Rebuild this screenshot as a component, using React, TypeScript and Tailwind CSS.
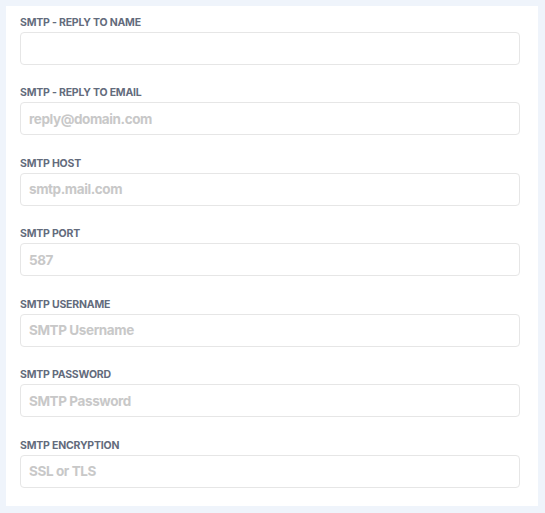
import React from 'react';

const fields = [
  { label: 'SMTP - REPLY TO NAME', placeholder: '' },
  { label: 'SMTP - REPLY TO EMAIL', placeholder: 'reply@domain.com' },
  { label: 'SMTP HOST', placeholder: 'smtp.mail.com' },
  { label: 'SMTP PORT', placeholder: '587' },
  { label: 'SMTP USERNAME', placeholder: 'SMTP Username' },
  { label: 'SMTP PASSWORD', placeholder: 'SMTP Password' },
  { label: 'SMTP ENCRYPTION', placeholder: 'SSL or TLS' },
];

const App: React.FC = () => {
  return (
    <div className="min-h-screen bg-[#eff4fb] p-[6px] font-['Inter',sans-serif]">
      <div className="w-[532px] bg-white pt-[8.5px] pb-[18.5px] pl-[14px] pr-[18px]">
        <div className="flex flex-col gap-[20.5px]">
          {fields.map((f) => (
            <div key={f.label} className="flex flex-col">
              <label className="h-[14px] text-[10.5px] leading-[16px] font-bold text-[#636b7c] tracking-[-0.2px]">
                {f.label}
              </label>
              <input
                type="text"
                placeholder={f.placeholder}
                className="mt-[3px] h-[33px] w-full rounded-[4px] border border-[#e6e6e6] bg-white px-[8px] text-[13.5px] font-bold text-[#4b5563] tracking-[-0.4px] placeholder:text-[#c8c8c8] outline-none"
              />
            </div>
          ))}
        </div>
      </div>
    </div>
  );
};

export default App;
